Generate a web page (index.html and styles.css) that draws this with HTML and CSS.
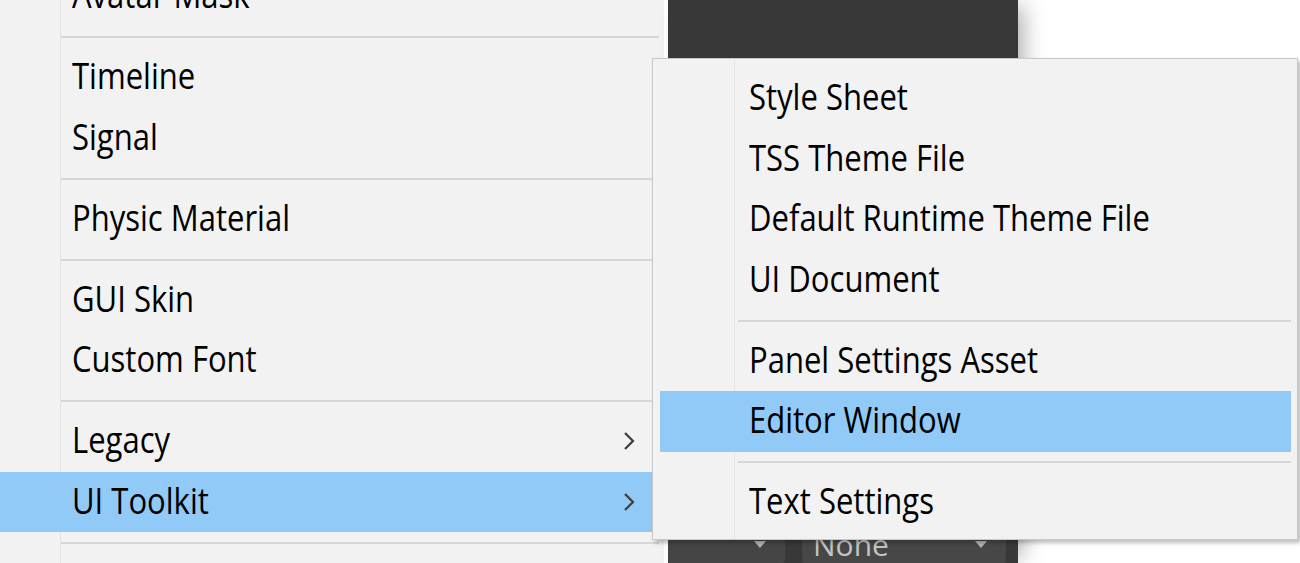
FILE: index.html
```html
<!DOCTYPE html>
<html lang="en">
<head>
  <meta charset="UTF-8">
  <title>Create menu - UI Toolkit</title>
  <link rel="stylesheet" href="styles.css">
</head>
<body>

  <div class="scene">
    <div class="menu">
      <div class="item"><span class="label">Avatar Mask</span></div>
      <div class="sep"></div>
      <div class="item"><span class="label">Timeline</span></div>
      <div class="item"><span class="label">Signal</span></div>
      <div class="sep"></div>
      <div class="item"><span class="label">Physic Material</span></div>
      <div class="sep"></div>
      <div class="item"><span class="label">GUI Skin</span></div>
      <div class="item"><span class="label">Custom Font</span></div>
      <div class="sep"></div>
      <div class="item has-sub">
        <span class="label">Legacy</span>
        <svg class="chev" viewBox="0 0 12 20" width="12" height="20"><path d="M2 2l8 8-8 8" /></svg>
      </div>
      <div class="item has-sub active">
        <span class="label">UI Toolkit</span>
        <svg class="chev" viewBox="0 0 12 20" width="12" height="20"><path d="M2 2l8 8-8 8" /></svg>
      </div>
      <div class="sep"></div>
    </div>

    <div class="inspector">
      <div class="field">
        <div class="drop drop-small">
          <svg class="arrow" viewBox="0 0 12 8" width="12" height="8"><path d="M0 0h12L6 7z" /></svg>
        </div>
        <div class="drop drop-wide">
          <span class="value">None</span>
          <svg class="arrow" viewBox="0 0 12 8" width="12" height="8"><path d="M0 0h12L6 7z" /></svg>
        </div>
      </div>
    </div>

    <div class="submenu">
      <div class="item"><span class="label">Style Sheet</span></div>
      <div class="item"><span class="label">TSS Theme File</span></div>
      <div class="item"><span class="label">Default Runtime Theme File</span></div>
      <div class="item"><span class="label">UI Document</span></div>
      <div class="sep"></div>
      <div class="item"><span class="label">Panel Settings Asset</span></div>
      <div class="item active"><span class="label">Editor Window</span></div>
      <div class="sep"></div>
      <div class="item"><span class="label">Text Settings</span></div>
    </div>
  </div>

</body>
</html>
```

FILE: styles.css
```css
body {
  margin: 0;
  width: 1300px;
  height: 563px;
  overflow: hidden;
  background-color: #ffffff;
  font-family: "Open Sans", "Noto Sans", sans-serif;
  color: #000;
}
.scene {
  position: relative;
  display: flex;
  height: 563px;
}

/* main context menu */
.menu {
  flex: 0 0 664px;
  margin-top: -34px;
  background-color: #f2f2f2;
  background-image: linear-gradient(90deg, transparent 60px, #e3e3e3 60px, #e3e3e3 61px, transparent 61px);
}
.item {
  display: flex;
  align-items: center;
  height: 60.5px;
  padding-left: 72px;
  padding-bottom: 3px;
  box-sizing: border-box;
  font-size: 36px;
  white-space: nowrap;
}
.label {
  display: inline-block;
  transform: scaleX(0.862);
  transform-origin: 0 50%;
}
.item.active {
  background-color: #91c9f7;
}
.has-sub {
  justify-content: space-between;
  padding-right: 29px;
}
.chev {
  margin-top: 3px;
}
.chev path {
  fill: none;
  stroke: #3c3c3c;
  stroke-width: 2.2;
}
.sep {
  height: 2px;
  margin: 9.5px 5px 9px 61px;
  background-color: #d7d7d7;
}

/* editor panel behind the menus */
.inspector {
  flex: 0 0 350px;
  margin-left: 4px;
  background-color: #383838;
  display: flex;
  flex-direction: column;
  justify-content: flex-end;
  box-shadow: 10px 0 22px -6px rgba(0, 0, 0, 0.35);
}
.field {
  display: flex;
  height: 44px;
  padding-right: 12px;
}
.drop {
  display: flex;
  justify-content: space-between;
  align-items: flex-start;
  padding-top: 11px;
  box-sizing: border-box;
  background-color: #454545;
  border-radius: 2px;
}
.drop-small {
  width: 117px;
  padding-left: 86px;
}
.drop-wide {
  flex: 1;
  margin-left: 17px;
  padding-left: 11px;
  padding-right: 19px;
  background-color: #474747;
}
.value {
  font-size: 30px;
  line-height: 30px;
  color: #c4c4c4;
}
.arrow {
  margin-top: 11px;
}
.arrow path {
  fill: #b4b4b4;
}

/* UI Toolkit submenu */
.submenu {
  position: absolute;
  left: 652px;
  top: 58px;
  width: 646px;
  height: 482px;
  box-sizing: border-box;
  padding: 9px 6px 6px 7px;
  background-color: #f2f2f2;
  background-image: linear-gradient(90deg, transparent 81px, #e4e4e4 81px, #e4e4e4 82px, transparent 82px);
  border: 1px solid #c8c8c8;
  box-shadow: 3px 3px 4px rgba(0, 0, 0, 0.25);
}
.submenu .item {
  padding-left: 89px;
}
.submenu .sep {
  margin: 9.5px 0 9px 78px;
}
```
